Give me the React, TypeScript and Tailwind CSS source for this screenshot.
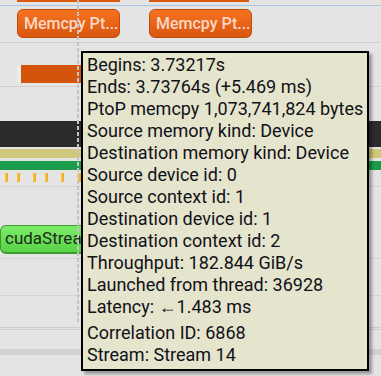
const rows = [
  'Begins: 3.73217s',
  'Ends: 3.73764s (+5.469 ms)',
  'PtoP memcpy 1,073,741,824 bytes',
  'Source memory kind: Device',
  'Destination memory kind: Device',
  'Source device id: 0',
  'Source context id: 1',
  'Destination device id: 1',
  'Destination context id: 2',
  'Throughput: 182.844 GiB/s',
  'Launched from thread: 36928',
  'Latency: \u21901.483 ms',
];

const ticks = [5, 17, 33, 45, 61, 78];

function MemcpyChip({ className = '' }: { className?: string }) {
  return (
    <div
      className={`flex h-[29px] w-[103px] items-center overflow-hidden whitespace-nowrap rounded-[6px] border border-[#c24b0a] bg-gradient-to-b from-[#f5731f] to-[#d9560f] pl-[6px] text-[16px] font-medium text-[#fcd8c6] ${className}`}
    >
      Memcpy Pt...
    </div>
  );
}

export default function App() {
  return (
    <div
      className="relative h-[376px] w-full overflow-hidden bg-[#e4e4e4]"
      style={{ fontFamily: "Roboto, 'Noto Sans', sans-serif" }}
    >
      <div className="flex flex-col">
        {/* top bars */}
        <div className="flex h-[3px]">
          <div className="ml-[17px] h-[2px] w-[103px] bg-[#da590f]" />
          <div className="ml-[29px] h-[2px] w-[100px] bg-[#da590f]" />
        </div>
        <div className="h-[2px]" />
        <div className="h-px bg-[#a9c6e4]" />
        <div className="h-[3px]" />
        <div className="flex h-[29px]">
          <MemcpyChip className="ml-[17px]" />
          <MemcpyChip className="ml-[29px] w-[100px]" />
        </div>
        <div className="h-[4px]" />
        <div className="h-px bg-[#d0d0d0]" />

        <div className="h-[22px]" />
        <div className="flex h-[18px]">
          <div className="ml-[17px] w-[4px] bg-[#ececec]" />
          <div className="w-[120px] bg-[#d4540c]" />
        </div>
        <div className="h-[3px]" />
        <div className="h-px bg-[#d0d0d0]" />

        <div className="h-[34px]" />
        <div className="h-[26px] bg-[#2b2b2b]" />
        <div className="h-[2px]" />
        <div className="h-[9px] bg-[#cfc87a]" />
        <div className="h-[3px]" />
        <div className="h-[9px] bg-[#1a9c4a]" />
        <div className="h-[3px]" />
        <div className="relative h-[9px]">
          {ticks.map((x) => (
            <div
              key={x}
              className="absolute top-0 h-[9px] w-[3px] bg-gradient-to-r from-[#f8c84a] to-[#f2a608]"
              style={{ left: x }}
            />
          ))}
        </div>
        <div className="h-[4px]" />
        <div className="h-px bg-[#d4d4d4]" />

        <div className="h-[38px]" />
        <div className="flex h-[29px]">
          <div className="flex w-[100px] items-center overflow-hidden whitespace-nowrap rounded-[6px] border border-[#3d9a33] border-b-2 bg-gradient-to-b from-[#7cec68] to-[#58d346] pl-[4px] text-[17px] text-[#1d2a1b]">
            cudaStream
          </div>
        </div>
        <div className="h-[4px]" />
        <div className="h-px bg-[#d4d4d4]" />
        <div className="h-[36px]" />
        <div className="h-px bg-[#d4d4d4]" />
        <div className="h-[31px]" />
        <div className="h-px bg-[#cccccc]" />
        <div className="h-px" />
        <div className="h-px bg-[#cccccc]" />
        <div className="h-[19px]" />
        <div className="h-[6px] bg-[#d2d2d2]" />
      </div>

      {/* time cursor */}
      <div className="absolute left-[77px] top-0 h-[322px] w-[2px] bg-[repeating-linear-gradient(to_bottom,#c4c4c4_0_4px,transparent_4px_6px)]" />

      {/* tooltip */}
      <div className="absolute left-[81px] top-[51px] h-[320px] w-[288px] border-2 border-black bg-[#e5e4cd] pl-1 pt-px text-[18px] leading-[22px] text-[#111118] shadow-[3px_3px_3px_rgba(0,0,0,0.35)]">
        {rows.map((r) => (
          <div key={r} className="whitespace-nowrap">
            {r}
          </div>
        ))}
        <div className="mt-1 whitespace-nowrap">Correlation ID: 6868</div>
        <div className="whitespace-nowrap">Stream: Stream 14</div>
      </div>
    </div>
  );
}
